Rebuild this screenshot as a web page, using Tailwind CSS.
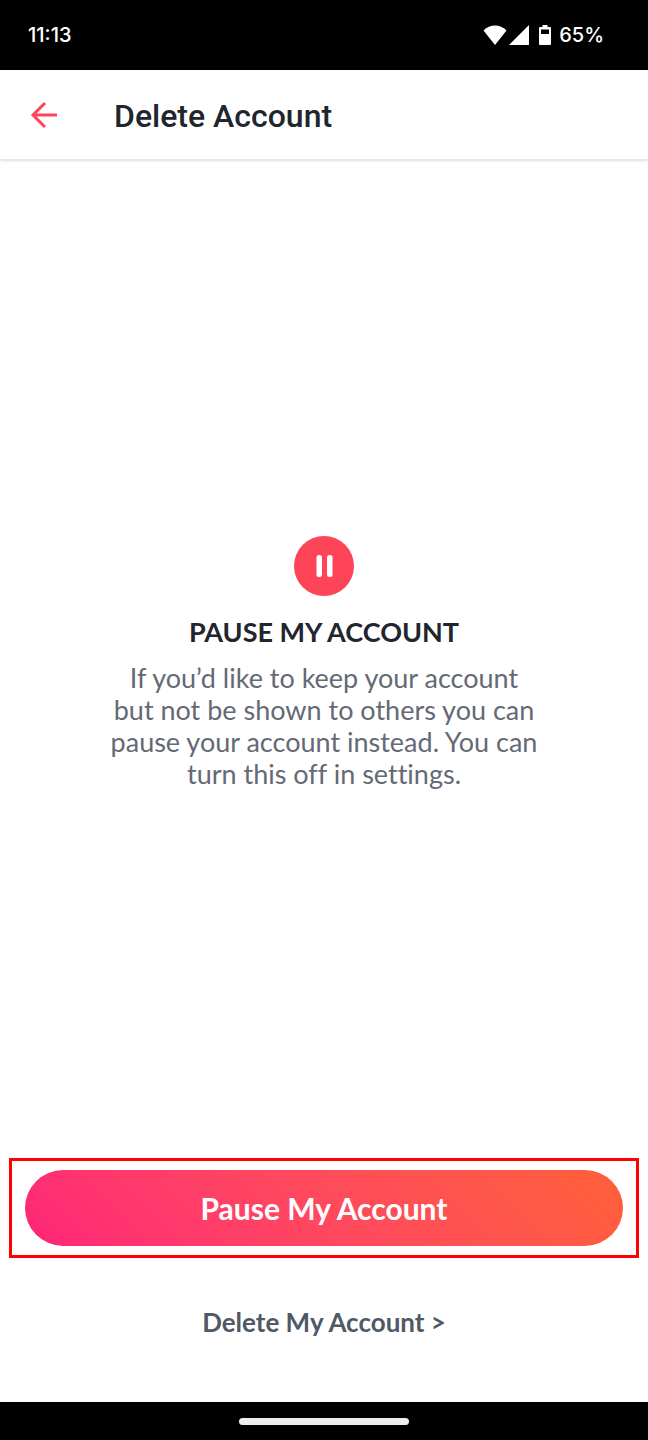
<!DOCTYPE html>
<html lang="en">
<head>
    <meta charset="UTF-8">
    <meta name="viewport" content="width=device-width, initial-scale=1.0">
    <title>Delete Account</title>
    <script src="https://cdn.jsdelivr.net/npm/@tailwindcss/browser@4"></script>
</head>
<body class="flex flex-col min-h-screen bg-white font-['Lato',sans-serif]">
    <!-- Status bar -->
    <div class="flex items-center justify-between h-[70px] pl-7 pr-11 bg-black text-white text-xl font-medium font-['Inter',sans-serif]">
        <span>11:13</span>
        <div class="flex items-center">
            <svg class="w-6 h-5" viewBox="0 0 24 20" fill="currentColor" aria-hidden="true"><path d="M12 20 0.500 5.500Q5.500 0.500 12 0.500T23.500 5.500Z"/></svg>
            <svg class="w-5 h-5 ml-0.5" viewBox="0 0 20 20" fill="currentColor" aria-hidden="true"><path d="M20 0V20H0Z"/></svg>
            <svg class="w-3 h-5 ml-2.5 mr-2" viewBox="0 0 12 20" fill="currentColor" fill-rule="evenodd" aria-hidden="true"><path d="M3.500 0h5v2H11a1 1 0 0 1 1 1v16a1 1 0 0 1-1 1H1a1 1 0 0 1-1-1V3a1 1 0 0 1 1-1h2.500ZM2 4.500V9h8V4.500Z"/></svg>
            <span>65%</span>
        </div>
    </div>

    <header class="flex items-center h-[90px] px-7 border-b border-gray-200 shadow-sm">
        <button type="button" aria-label="Back" class="text-[#fd4458]">
            <svg class="w-8 h-8" viewBox="0 0 32 32" fill="none" stroke="currentColor" stroke-width="3" aria-hidden="true"><path d="M29 16H6M17 4 5 16l12 12"/></svg>
        </button>
        <h1 class="ml-[54px] pt-0.5 text-[32px] font-medium text-[#21262e] font-['Roboto',sans-serif]">Delete Account</h1>
    </header>

    <main class="flex flex-col flex-1 text-center">
        <section class="flex flex-col flex-1 items-center justify-center px-24 pt-2">
            <svg class="w-[60px] h-[60px]" viewBox="0 0 60 60" aria-hidden="true">
                <circle cx="30" cy="30" r="30" fill="#fd4458"/>
                <rect x="22.500" y="19" width="5.500" height="22" rx="2.500" fill="#fff"/>
                <rect x="33" y="19" width="5.500" height="22" rx="2.500" fill="#fff"/>
            </svg>
            <h2 class="mt-5 text-[27px] leading-8 font-bold text-[#21262e]">PAUSE MY ACCOUNT</h2>
            <p class="mt-3.5 text-[27px] leading-8 text-[#656976] [font-variant-ligatures:none]">
                If you’d like to keep your account<br>
                but not be shown to others you can<br>
                pause your account instead. You can<br>
                turn this off in settings.
            </p>
        </section>

        <div class="mx-[9px] px-[13px] py-[9px] border-3 border-[#fd0000]">
            <button type="button" class="w-full h-[76px] rounded-full bg-linear-45 from-[#ff2478] to-[#ff6036] text-[30px] font-bold text-white">Pause My Account</button>
        </div>
        <a href="#" class="self-center mt-12 mb-16 text-[26px] leading-8 font-bold text-[#505965]">Delete My Account &gt;</a>
    </main>

    <!-- Gesture bar -->
    <div class="flex items-center justify-center h-[38px] bg-black">
        <div class="w-[170px] h-[7px] rounded-full bg-[#eeecec]"></div>
    </div>
</body>
</html>
